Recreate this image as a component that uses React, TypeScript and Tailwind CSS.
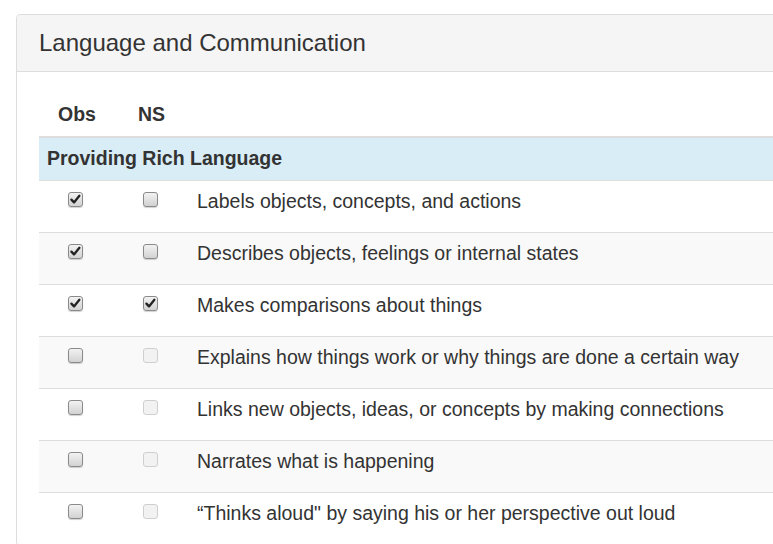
import React from 'react'

type Item = { text: string; obs: boolean; ns: boolean; nsDisabled: boolean }

const items: Item[] = [
  { text: 'Labels objects, concepts, and actions', obs: true, ns: false, nsDisabled: false },
  { text: 'Describes objects, feelings or internal states', obs: true, ns: false, nsDisabled: false },
  { text: 'Makes comparisons about things', obs: true, ns: true, nsDisabled: false },
  { text: 'Explains how things work or why things are done a certain way', obs: false, ns: false, nsDisabled: true },
  { text: 'Links new objects, ideas, or concepts by making connections', obs: false, ns: false, nsDisabled: true },
  { text: 'Narrates what is happening', obs: false, ns: false, nsDisabled: true },
  { text: '\u201CThinks aloud" by saying his or her perspective out loud', obs: false, ns: false, nsDisabled: true },
]

// Box: old-style greyed checkbox as the browser drew it
function Box({ checked, disabled }: { checked: boolean; disabled?: boolean }) {
  return (
    <span
      className={
        'relative inline-block w-[15px] h-[15px] rounded-[3px] border ' +
        (disabled
          ? 'border-[#cfcfcf] bg-[#f2f2f2]'
          : 'border-[#8a8a8a] bg-gradient-to-b from-[#f2f2f2] to-[#d2d2d2] shadow-[0_1px_1px_rgba(0,0,0,0.18)]')
      }
    >
      {checked && (
        <svg viewBox="0 0 15 15" className="absolute -left-px -top-px w-[15px] h-[15px]">
          <path d="M3.4 7.6 L6 10.4 L11.4 3.8" fill="none" stroke="#222" strokeWidth="2.3" strokeLinecap="round" strokeLinejoin="round" />
        </svg>
      )}
    </span>
  )
}

export default function App() {
  return (
    <div className="w-[773px] h-[544px] overflow-hidden bg-white pt-[14px] pl-4 text-[#333]" style={{ fontFamily: '"Liberation Sans", Arial, sans-serif' }}>
      <section className="w-[800px] border border-[#ddd] rounded-[4px] bg-white">
        <header className="h-[57px] bg-[#f5f5f5] border-b border-[#ddd] rounded-t-[4px] flex items-center pl-[22px]">
          <h2 className="text-[24px] leading-none">Language and Communication</h2>
        </header>
        <div className="pl-[22px] pt-[22px]">
          <div className="flex h-[44px] items-center border-b-2 border-[#ddd] text-[19.5px] font-bold">
            <div className="w-[80px] pl-[19px]">Obs</div>
            <div className="w-[78px] pl-[19px]">NS</div>
          </div>
          <div className="h-[43px] bg-[#d9edf7] border-b border-[#ddd] flex items-center pl-2 text-[19.5px] font-bold">
            Providing Rich Language
          </div>
          {items.map((it, i) => (
            <div
              key={i}
              className={'flex h-[52px] border-b border-[#ddd] ' + (i % 2 === 1 ? 'bg-[#f9f9f9]' : 'bg-white')}
            >
              <div className="w-[80px] pl-[29px] pt-[9px]">
                <Box checked={it.obs} />
              </div>
              <div className="w-[78px] pl-[24px] pt-[9px]">
                <Box checked={it.ns} disabled={it.nsDisabled} />
              </div>
              <div className="pt-[6px] text-[19.5px] leading-[28px] whitespace-nowrap">{it.text}</div>
            </div>
          ))}
        </div>
      </section>
    </div>
  )
}
